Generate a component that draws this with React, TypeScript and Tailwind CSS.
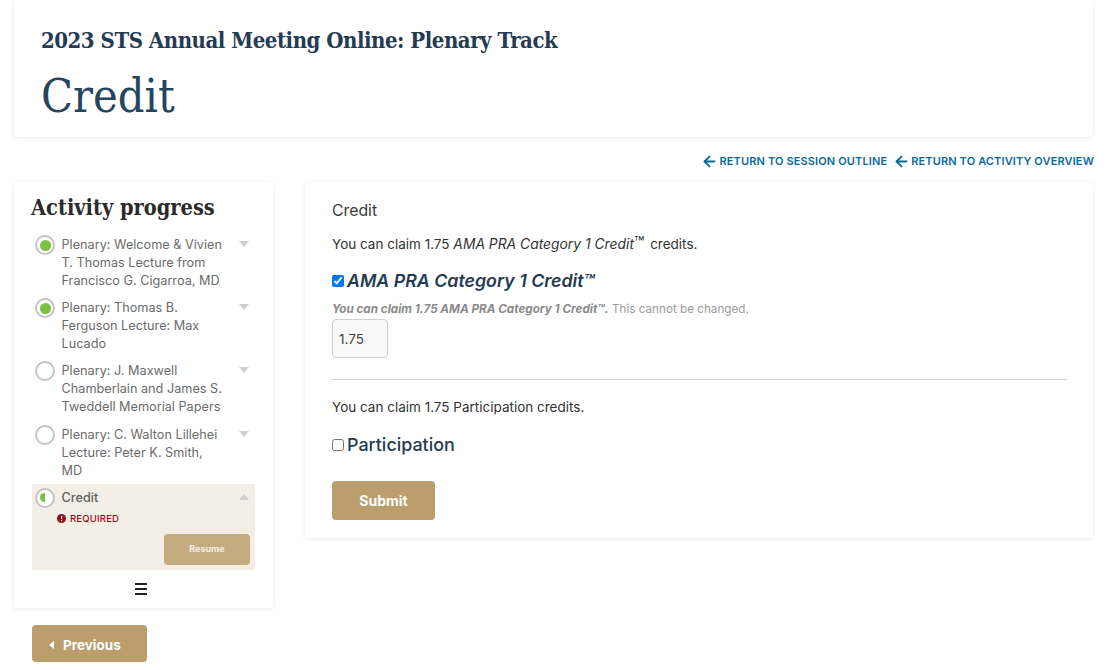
import { ArrowLeft } from "lucide-react";

const sans = "font-['Inter','Liberation_Sans',sans-serif]";
const serif = "font-['DejaVu_Serif_Condensed','DejaVu_Serif',serif]";

const steps = [
  { lines: ["Plenary: Welcome & Vivien", "T. Thomas Lecture from", "Francisco G. Cigarroa, MD"], done: true },
  { lines: ["Plenary: Thomas B.", "Ferguson Lecture: Max", "Lucado"], done: true },
  { lines: ["Plenary: J. Maxwell", "Chamberlain and James S.", "Tweddell Memorial Papers"], done: false },
  { lines: ["Plenary: C. Walton Lillehei", "Lecture: Peter K. Smith,", "MD"], done: false },
];

function Ring({ children }: { children?: React.ReactNode }) {
  return (
    <span className="flex h-[20px] w-[20px] shrink-0 items-center justify-center rounded-full border-2 border-[#c4c4c4] bg-white">
      {children}
    </span>
  );
}

function Caret({ up }: { up?: boolean }) {
  return (
    <svg width="10" height="6" viewBox="0 0 10 6" className="mt-[6px] shrink-0">
      <path d={up ? "M0 6L5 0L10 6Z" : "M0 0H10L5 6Z"} fill="#cfcfcf" />
    </svg>
  );
}

function BackLink({ label }: { label: string }) {
  return (
    <a className="flex items-center gap-[1px] text-[11px] leading-4 font-semibold tracking-[0.13px] text-[#0b6a9c]">
      <ArrowLeft className="h-[17px] w-[17px]" strokeWidth={2.6} />
      {label}
    </a>
  );
}

export default function App() {
  return (
    <div className={`${sans} h-[670px] overflow-hidden bg-white px-[14px]`}>
      <header className="h-[137px] w-[1079px] rounded-b-[4px] bg-white pt-[25px] pl-[27px] shadow-[0_1px_4px_rgba(0,0,0,0.08)]">
        <h2 className={`${serif} text-[22px] leading-[30px] font-bold tracking-[-0.48px] text-[#243b53]`}>
          2023 STS Annual Meeting Online: Plenary Track
        </h2>
        <h1 className={`${serif} mt-[10px] text-[46.5px] leading-[62px] font-normal text-[#234560]`}>Credit</h1>
      </header>

      <div className="mt-[16px] flex h-[16px] w-[1080px] justify-end gap-[6px]">
        <BackLink label="RETURN TO SESSION OUTLINE" />
        <BackLink label="RETURN TO ACTIVITY OVERVIEW" />
      </div>

      <div className="mt-[13px] flex items-start gap-[32px]">
        <div className="w-[259px]">
          <aside className="h-[426px] rounded-[4px] bg-white px-[18px] pt-[11px] shadow-[0_1px_4px_rgba(0,0,0,0.08)]">
            <h3 className={`${serif} ml-[-1px] text-[21.6px] leading-[30px] font-bold text-[#2b2b2b]`}>Activity progress</h3>
            <ul className="mt-[12px]">
              {steps.map((step) => (
                <li key={step.lines[0]} className="flex h-[63.2px] pl-[3px] pr-[6px]">
                  <Ring>{step.done && <span className="h-[11px] w-[11px] rounded-full bg-[#7ac143]" />}</Ring>
                  <p className="ml-[6.5px] flex-1 pt-[1px] text-[12.7px] leading-[18px] text-[#6b6b6b]">
                    {step.lines.map((line) => (
                      <span key={line} className="block whitespace-nowrap">
                        {line}
                      </span>
                    ))}
                  </p>
                  <Caret />
                </li>
              ))}
              <li className="-mt-[4.2px] h-[86px] bg-[#f3efe7] pt-[4px] pr-[5px] pl-[3px]">
                <div className="flex pr-[1px]">
                  <Ring>
                    <span className="mr-[6px] h-[9px] w-[5px] rounded-l-full bg-[#7ac143]" />
                  </Ring>
                  <span className="ml-[6.5px] flex-1 pt-[1px] text-[12.7px] leading-[18px] font-medium text-[#5f5f5f]">
                    Credit
                  </span>
                  <Caret up />
                </div>
                <div className="mt-[5px] ml-[22px] flex items-center gap-[4px] text-[9.5px] leading-3 font-medium tracking-[0.2px] text-[#8f0f1c]">
                  <svg width="9" height="9" viewBox="0 0 9 9">
                    <circle cx="4.5" cy="4.5" r="4.5" fill="#8f0f1c" />
                    <rect x="4" y="1.8" width="1.2" height="3.4" fill="#fff" />
                    <rect x="4" y="6" width="1.2" height="1.2" fill="#fff" />
                  </svg>
                  REQUIRED
                </div>
                <div className="mt-[9px] flex justify-end">
                  <button className="h-[31px] w-[86px] rounded-[4px] bg-[#c5ab80] text-[9px] font-bold text-[#f3efe7]">
                    Resume
                  </button>
                </div>
              </li>
            </ul>
            <div className="mt-[13px] flex justify-center pr-[6px]">
              <svg width="12" height="12" viewBox="0 0 12 12" fill="#222">
                <rect y="0" width="12" height="2" />
                <rect y="5" width="12" height="2" />
                <rect y="10" width="12" height="2" />
              </svg>
            </div>
          </aside>
          <button className="mt-[17px] ml-[18px] flex h-[37px] w-[115px] items-center gap-[9px] rounded-[4px] bg-[#bb9e6c] pt-[3px] pl-[17px] text-[13.5px] font-bold text-white">
            <svg width="5" height="8" viewBox="0 0 5 8">
              <path d="M5 0V8L0 4Z" fill="#fff" />
            </svg>
            Previous
          </button>
        </div>

        <main className="h-[356px] w-[788px] rounded-[4px] bg-white pt-[19px] pr-[26px] pl-[27px] shadow-[0_1px_4px_rgba(0,0,0,0.08)]">
          <h4 className="text-[15.8px] leading-[20px] font-normal text-[#3a3a3a]">Credit</h4>
          <p className="mt-[14px] text-[13.5px] leading-[18px] text-[#333]">
            You can claim 1.75 <em className="text-[13.85px]">AMA PRA Category 1 Credit</em>
            <span className="mr-[2px] text-[17px] leading-none">™</span> credits.
          </p>
          <label className="mt-[16px] flex h-[24px] items-center gap-[3px]">
            <input type="checkbox" defaultChecked className="h-[12px] w-[12px] accent-[#0075ff]" />
            <span className="text-[17.8px] font-semibold text-[#243b53] italic">AMA PRA Category 1 Credit™</span>
          </label>
          <p className="mt-[9px] text-[11.7px] leading-[14px] text-[#9a9a9a]">
            <strong className="font-bold italic text-[#8a8a8a]">You can claim 1.75 AMA PRA Category 1 Credit™.</strong>{" "}
            This cannot be changed.
          </p>
          <input
            readOnly
            value="1.75"
            className="mt-[3px] block h-[39px] w-[56px] rounded-[4px] border border-[#cfcfcf] bg-[#f9f9f9] px-[6px] text-[13.5px] text-[#444]"
          />
          <hr className="mt-[21px] border-[#cfcfcf]" />
          <p className="mt-[18px] text-[13.5px] leading-[18px] text-[#333]">You can claim 1.75 Participation credits.</p>
          <label className="mt-[17px] flex h-[24px] items-center gap-[3px]">
            <input type="checkbox" className="h-[12px] w-[12px]" />
            <span className="text-[17.9px] font-medium text-[#243b53]">Participation</span>
          </label>
          <button className="mt-[24px] h-[39px] w-[103px] rounded-[4px] bg-[#bb9e6c] text-[14px] font-bold text-white">
            Submit
          </button>
        </main>
      </div>
    </div>
  );
}
